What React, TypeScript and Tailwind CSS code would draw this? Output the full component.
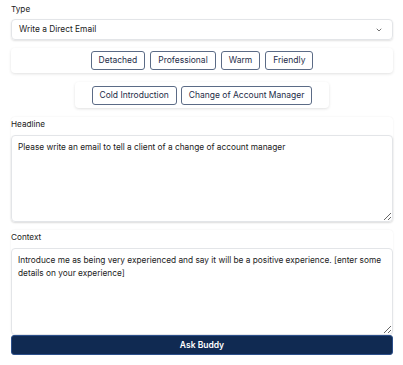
import { ChevronDown } from 'lucide-react';

const tones = ['Detached', 'Professional', 'Warm', 'Friendly'];
const scenarios = ['Cold Introduction', 'Change of Account Manager'];

const Chip = ({ label }: { label: string }) => (
    <button className="h-[19px] px-[7px] rounded-[3px] border border-[#5b6b86] text-[#1d2b48] text-[8.5px] leading-none bg-white">
        {label}
    </button>
);

const App = () => {
    return (
        <div className="bg-white w-[403px] h-[365px] font-['Inter',sans-serif] text-[#222]">
            <div className="ml-[11px] w-[382px] flex flex-col">
                <label className="text-[8.2px] pt-[3px] h-[19px] leading-[12px]">Type</label>
                <div className="h-[21px] rounded-[4px] border border-[#e3e5e8] shadow-[0_1px_2px_rgba(0,0,0,0.12)] flex items-center justify-between pl-[7px] pr-[9px] text-[8.4px]">
                    <span>Write a Direct Email</span>
                    <ChevronDown size={8} strokeWidth={2.5} className="text-[#555]" />
                </div>

                <div className="mt-[8px] h-[25px] rounded-[4px] shadow-[0_1px_3px_rgba(0,0,0,0.12)] flex items-center justify-center gap-[5px]">
                    {tones.map(t => <Chip key={t} label={t} />)}
                </div>

                <div className="mt-[9px] self-center h-[26px] px-[17px] rounded-[4px] shadow-[0_1px_3px_rgba(0,0,0,0.12)] flex items-center gap-[4px]">
                    {scenarios.map(s => <Chip key={s} label={s} />)}
                </div>

                <div className="mt-[9px] rounded-[4px] shadow-[0_0_2px_rgba(0,0,0,0.08)] flex flex-col">
                    <label className="text-[8.2px] h-[18px] pt-[1px] leading-[12px]">Headline</label>
                    <textarea
                        className="h-[87px] rounded-[4px] border border-[#e3e5e8] shadow-[0_1px_2px_rgba(0,0,0,0.12)] pl-[6px] pr-[4px] py-[5px] text-[8.3px] leading-[13px] text-[#222] outline-none"
                        defaultValue="Please write an email to tell a client of a change of account manager"
                    />
                </div>

                <div className="mt-[8px] rounded-[4px] shadow-[0_0_2px_rgba(0,0,0,0.08)] flex flex-col">
                    <label className="text-[8.2px] h-[18px] pt-[1px] leading-[12px]">Context</label>
                    <textarea
                        className="h-[87px] rounded-[4px] border border-[#e3e5e8] pl-[6px] pr-[4px] py-[5px] text-[8.3px] leading-[13px] text-[#222] outline-none"
                        defaultValue="Introduce me as being very experienced and say it will be a positive experience. [enter some details on your experience]"
                    />
                </div>

                <button className="h-[20px] rounded-[3px] bg-[#102a52] border border-[#2c4f8a] text-white text-[8.5px] font-semibold">
                    Ask Buddy
                </button>
            </div>
        </div>
    );
};

export default App;
